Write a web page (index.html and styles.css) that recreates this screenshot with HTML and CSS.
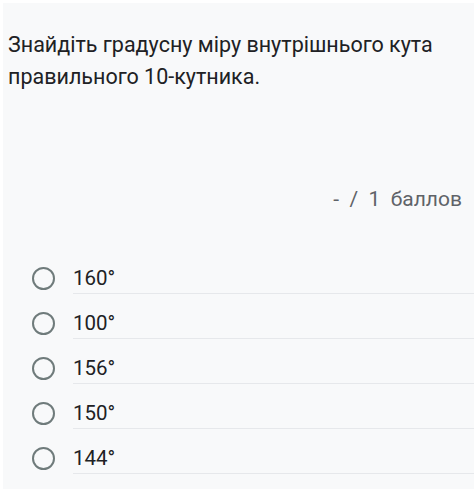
FILE: index.html
```html
<!DOCTYPE html>
<html lang="uk">
<head>
    <meta charset="UTF-8">
    <title>Тест</title>
    <link rel="stylesheet" href="styles.css">
</head>
<body>
    <div class="card">
        <div class="question">Знайдіть градусну міру внутрішнього кута правильного 10-кутника.</div>
        <div class="points">- &nbsp;/&nbsp; 1 &nbsp;баллов</div>
        <div class="options">
            <div class="option"><span class="radio"></span><span class="label">160°</span></div>
            <div class="option"><span class="radio"></span><span class="label">100°</span></div>
            <div class="option"><span class="radio"></span><span class="label">156°</span></div>
            <div class="option"><span class="radio"></span><span class="label">150°</span></div>
            <div class="option"><span class="radio"></span><span class="label">144°</span></div>
        </div>
    </div>
</body>
</html>
```

FILE: styles.css
```css
body {
    margin: 0;
    background-color: #fff;
    font-family: Roboto, 'Noto Sans', sans-serif;
}

.card {
    margin: 3px 0 0 3px;
    padding: 26px 0 0 5px;
    background-color: #f8f9fa;
    min-height: 483px;
    box-sizing: border-box;
}

.question {
    font-size: 21.5px;
    line-height: 32px;
    color: #202124;
    padding-right: 20px;
}

.points {
    margin-top: 94px;
    padding-right: 12px;
    text-align: right;
    font-size: 21px;
    color: #5f6368;
}

.options {
    margin-top: 53px;
}

.option {
    display: flex;
    align-items: flex-start;
    height: 45px;
}

.radio {
    width: 19px;
    height: 19px;
    border: 2.5px solid #6f7b7b;
    border-radius: 50%;
    margin: 3px 18px 0 24px;
    flex-shrink: 0;
}

.label {
    flex: 1;
    line-height: 29px;
    font-size: 20.5px;
    color: #202124;
    border-bottom: 1px solid #e6e8eb;
}
```
